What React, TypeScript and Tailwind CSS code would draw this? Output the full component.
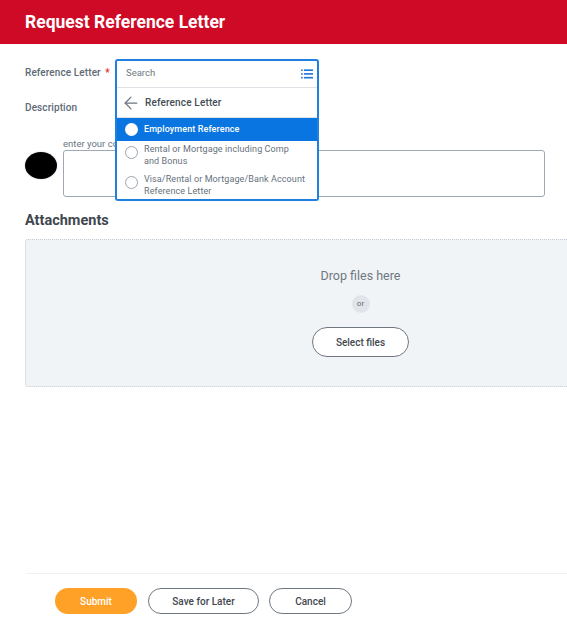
import { ArrowLeft } from "lucide-react";

const OPTIONS = [
  { label: "Employment Reference", selected: true },
  { label: "Rental or Mortgage including Comp and Bonus", selected: false },
  { label: "Visa/Rental or Mortgage/Bank Account Reference Letter", selected: false },
];

function ListIcon() {
  return (
    <svg width="12" height="10" viewBox="0 0 12 10" fill="#1a73d8">
      <circle cx="0.9" cy="1.2" r="0.9" />
      <rect x="3" y="0.4" width="9" height="1.6" />
      <circle cx="0.9" cy="4.9" r="0.9" />
      <rect x="3" y="4.1" width="9" height="1.6" />
      <circle cx="0.9" cy="8.7" r="0.9" />
      <rect x="3" y="7.9" width="9" height="1.6" />
    </svg>
  );
}

function ReferencePicker() {
  return (
    <div className="relative w-[204px] h-[28px]">
      <div className="flex items-center justify-between h-[29px] pb-[2px] pl-[9px] pr-[4px] border-2 border-b-0 border-[#1f80e0] rounded-t-[3px] bg-white">
        <span className="text-[9.5px] text-[#6f7880]">Search</span>
        <ListIcon />
      </div>
      <div className="absolute z-10 left-0 top-[28px] w-[204px] bg-white border-2 border-[#1f80e0] border-t-0 rounded-b-[3px]">
        <div className="flex items-center h-[31px] pl-[4px] gap-[4px] border-t border-b border-[#dfe3e8]">
          <ArrowLeft size={20} strokeWidth={1.5} color="#6b7683" />
          <span className="text-[10px] font-medium text-[#444c55] tracking-[0.15px]">Reference Letter</span>
        </div>
        {OPTIONS.map((o, i) => (
          <div
            key={o.label}
            className={
              o.selected
                ? "flex items-center h-[23px] pl-[8px] gap-[6px] bg-[#0875e1] text-white font-medium"
                : i === 1
                  ? "flex items-start h-[29px] pt-[3px] pl-[8px] gap-[6px] text-[#66717c]"
                  : "flex items-start h-[29px] pt-[4px] pl-[8px] gap-[6px] text-[#66717c]"
            }
          >
            <span
              className={
                o.selected
                  ? "shrink-0 w-[13px] h-[13px] rounded-full bg-white"
                  : "shrink-0 w-[13px] h-[13px] mt-[2px] rounded-full border border-[#9aa4ae] bg-white"
              }
            />
            <span className="text-[9px] leading-[11.5px] w-[162px] tracking-[0.1px]">{o.label}</span>
          </div>
        ))}
      </div>
    </div>
  );
}

export default function App() {
  return (
    <div className="flex flex-col w-[567px] h-[619px] overflow-hidden bg-white font-['Roboto',sans-serif]">
      <header className="flex items-center shrink-0 h-[44px] pl-[25px] bg-[#cf0a26]">
        <h1 className="text-[17.5px] font-bold text-white">Request Reference Letter</h1>
      </header>

      <main className="flex flex-col pl-[25px] pt-[15px]">
        <div className="flex items-center h-[28px]">
          <label className="w-[90px] pb-[2px] text-[10px] font-medium text-[#5e6a75] tracking-[0.1px]">
            Reference Letter <span className="text-[#de2e21] ml-[2px]">*</span>
          </label>
          <ReferencePicker />
        </div>

        <div className="flex items-center h-[14px] mt-[13px] text-[10px] font-medium text-[#5e6a75] tracking-[0.1px]">
          Description
        </div>

        <div className="flex mt-[23px]">
          <div className="shrink-0 w-[32px] h-[27px] mt-[15px] rounded-[50%] bg-black shadow-[0_0_2px_#c5ccd3]" />
          <div className="ml-[6px] w-[482px]">
            <div className="h-[14px] text-[9.5px] leading-[14px] text-[#6b7480]">enter your comment</div>
            <div className="h-[47px] -mt-[1px] border border-[#a0a9b3] rounded-[3px] bg-white" />
          </div>
        </div>

        <h2 className="mt-[15px] text-[14.5px] leading-[18px] font-bold text-[#3f474f]">Attachments</h2>

        <div className="flex flex-col items-center mt-[9px] w-[671px] h-[148px] pt-[28px] bg-[#f0f4f7] border border-dotted border-[#c5ccd3] rounded-[3px]">
          <div className="text-[12.5px] leading-[16px] text-[#6f7880]">Drop files here</div>
          <div className="flex items-center justify-center mt-[11px] w-[18px] h-[18px] rounded-full bg-[#e1e5e9] text-[8px] text-[#5e6a75]">
            or
          </div>
          <button
            type="button"
            className="mt-[14px] w-[97px] h-[30px] rounded-full border border-[#6f7880] bg-white text-[10px] font-medium text-[#3f474f]"
          >
            Select files
          </button>
        </div>
      </main>

      <footer className="mt-auto ml-[26px] flex items-start h-[46px] pt-[14px] pl-[29px] gap-[10px] border-t border-[#eef0f2] text-[10px] font-medium">
        <button type="button" className="w-[82px] h-[26px] mr-[1px] rounded-full bg-[#ffa126] text-white">
          Submit
        </button>
        <button type="button" className="w-[111px] h-[26px] rounded-full border border-[#6f7880] bg-white text-[#3f474f]">
          Save for Later
        </button>
        <button type="button" className="w-[83px] h-[26px] rounded-full border border-[#6f7880] bg-white text-[#3f474f]">
          Cancel
        </button>
      </footer>
    </div>
  );
}
